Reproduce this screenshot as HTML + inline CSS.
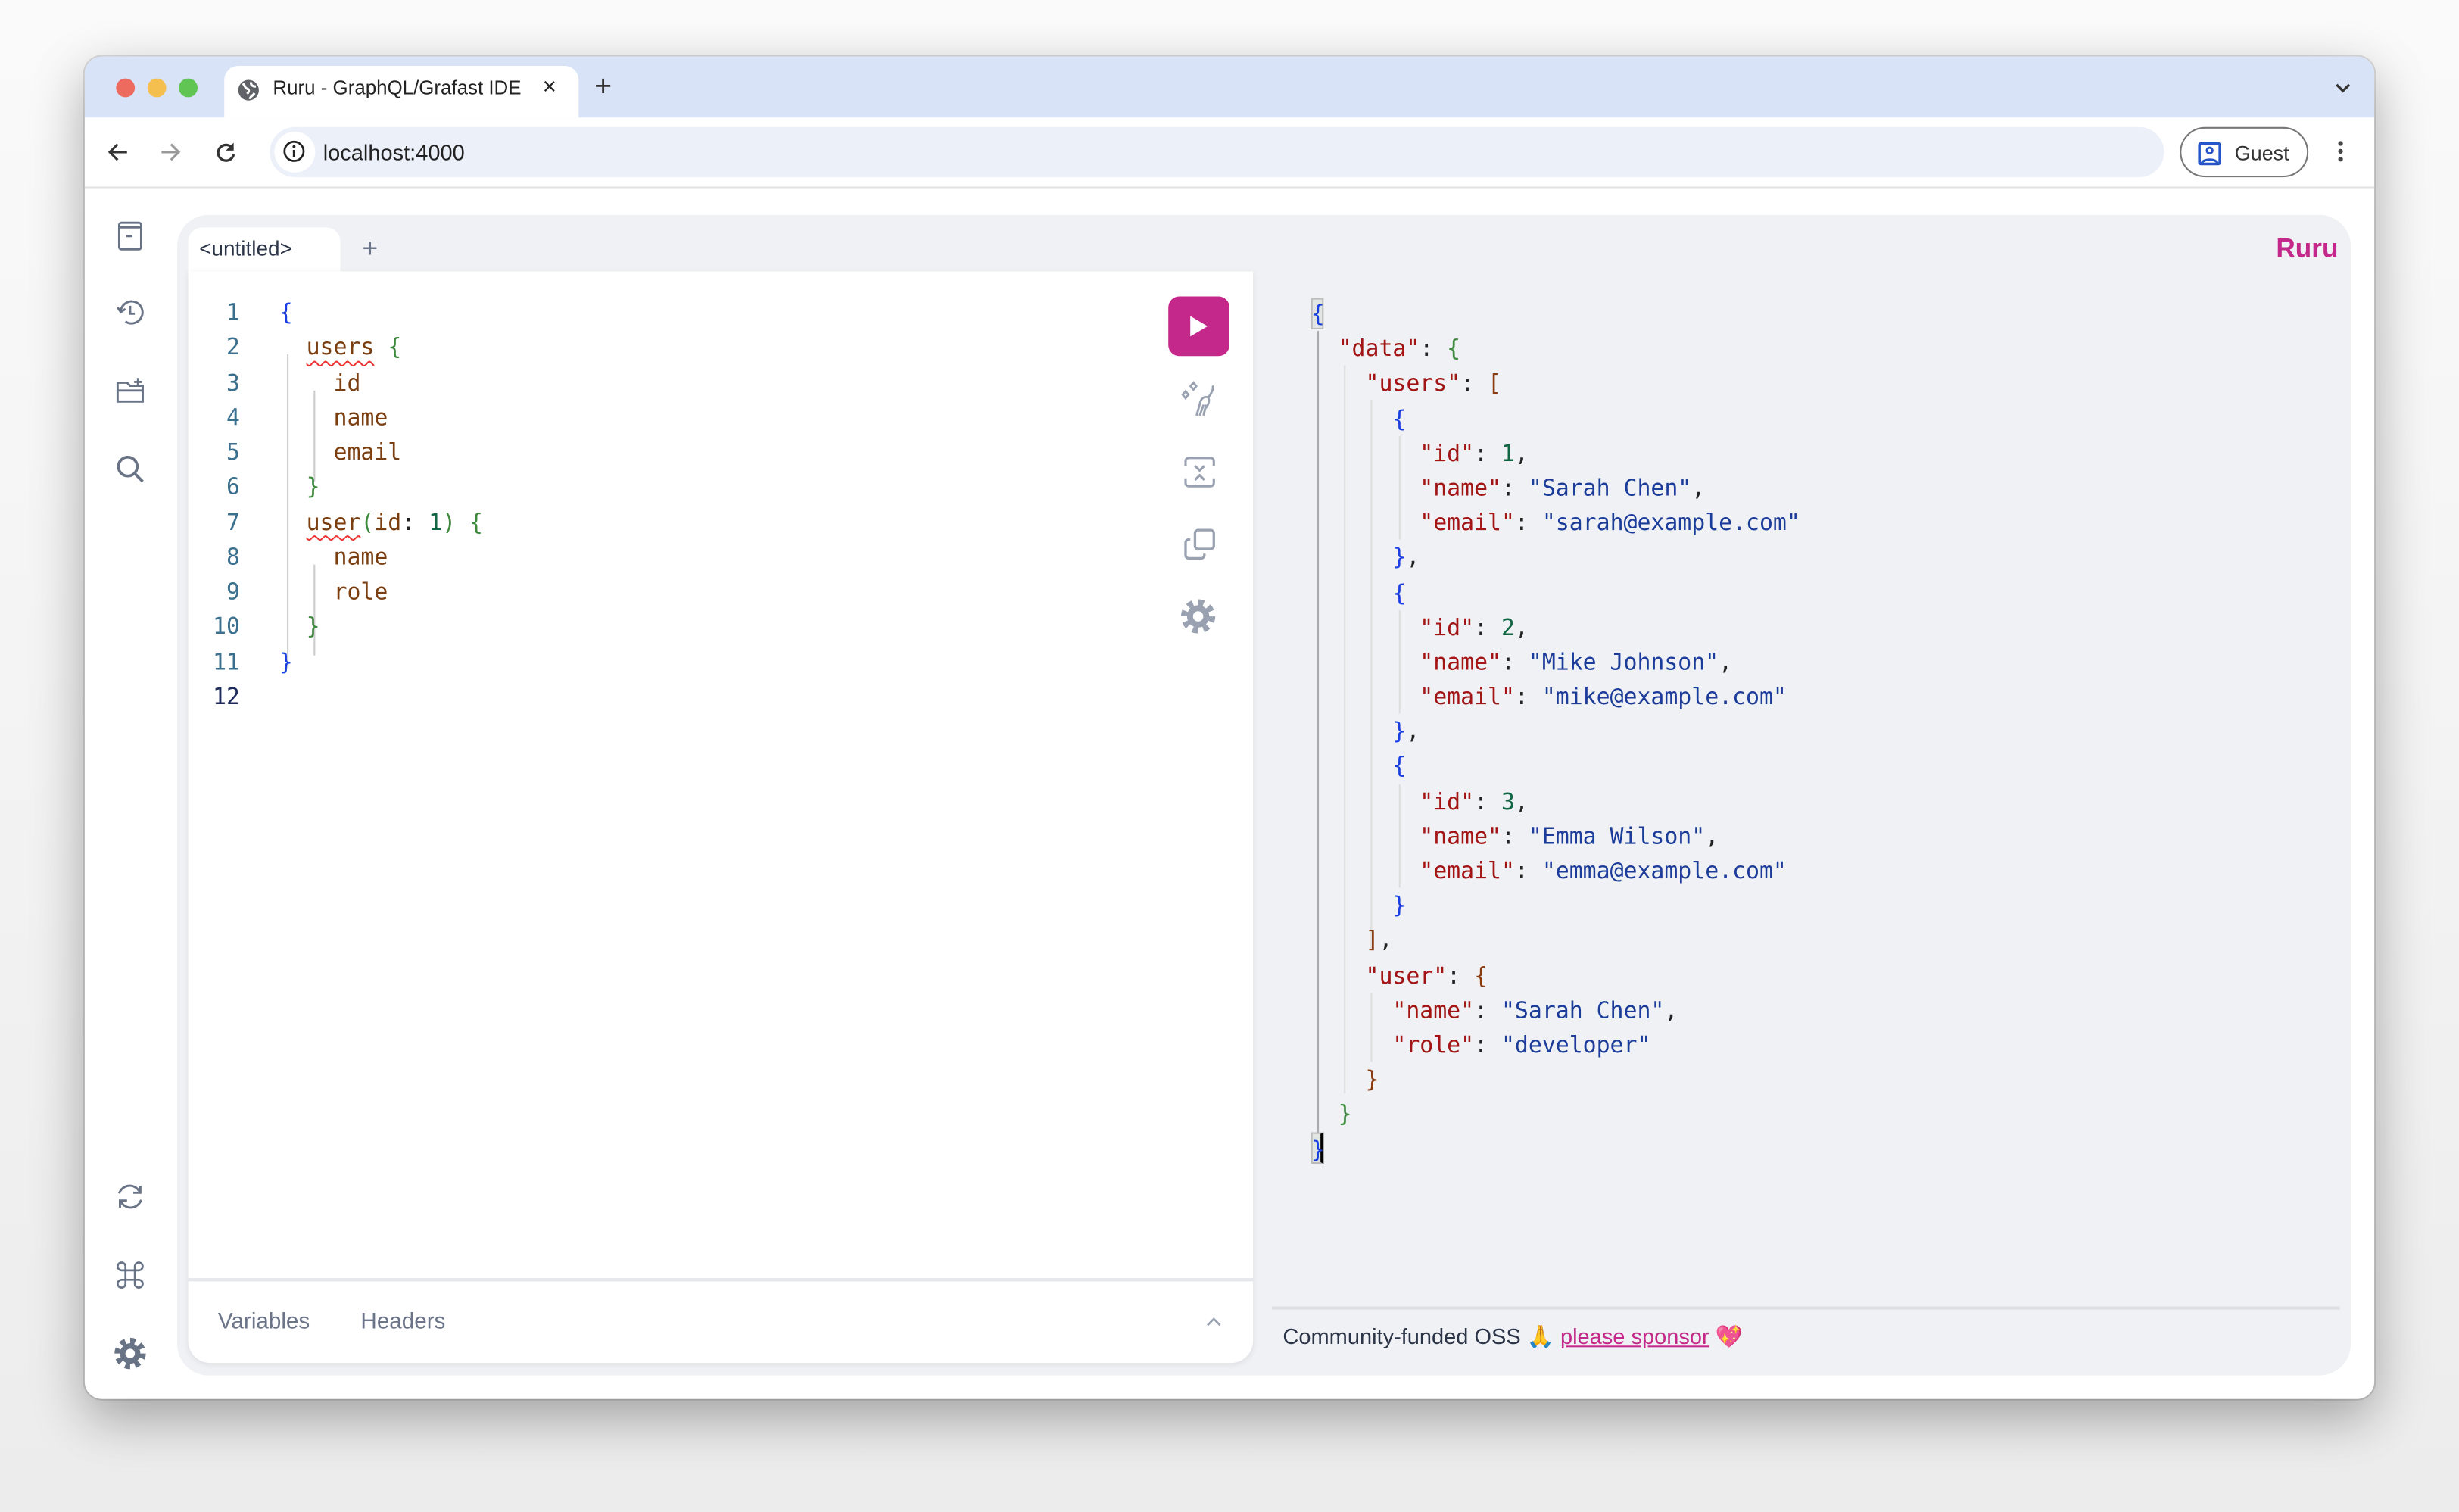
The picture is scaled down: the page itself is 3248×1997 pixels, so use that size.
<!DOCTYPE html>
<html><head><meta charset="utf-8">
<style>
*{box-sizing:border-box;margin:0;padding:0}
html,body{width:3248px;height:1996px;overflow:hidden;background:#f4f4f4}
#w{position:absolute;left:0;top:0;width:1568px;height:964px;transform:scale(2.07143);transform-origin:0 0;font-family:"Liberation Sans",sans-serif;background:linear-gradient(#fafafa,#ececec)}
.win{position:absolute;left:54px;top:36px;width:1460px;height:856px;border-radius:11px;background:#fff;box-shadow:0 12px 34px rgba(0,0,0,.32),0 0 0 1px rgba(0,0,0,.12);overflow:hidden}
.tabbar{position:absolute;left:0;top:0;width:100%;height:39px;background:#d9e3f7}
.dot{position:absolute;top:14px;width:12px;height:12px;border-radius:50%}
.ctab{position:absolute;left:89px;top:6px;width:226px;height:33px;background:#fff;border-radius:9px 9px 0 0;font-size:12.5px;color:#222}
.addr{position:absolute;left:0;top:39px;width:100%;height:45px;background:#fff;border-bottom:1px solid #e2e2e2}
.url{position:absolute;left:118px;top:6px;width:1208px;height:32px;border-radius:16px;background:#ecf1f9}
.mono{font-family:"DejaVu Sans Mono","Liberation Mono",monospace;font-size:14.4px;line-height:22.25px;white-space:pre}
.main{position:absolute;left:59px;top:101px;width:1386px;height:740px;background:#eff1f4;border-radius:20px}
.ed{position:absolute;left:7px;top:36px;width:679px;height:696px;background:#fff;border-radius:0 0 14px 14px;box-shadow:0 1px 4px rgba(0,0,0,.08)}
.k{color:#a31515}.s{color:#1c3c9a}.n{color:#116644}.b0{color:#1a3fe0}.b1{color:#3d8a3d}.b2{color:#8b3a0e}.f{color:#7a3e10}
.sq{text-decoration:underline wavy #e33;text-underline-offset:3px;text-decoration-thickness:1px}
.ic{position:absolute}
</style></head><body><div id="w">
<div class="win">
 <div class="tabbar">
  <div class="dot" style="left:20px;background:#ec6a5e"></div>
  <div class="dot" style="left:40px;background:#f4bf4f"></div>
  <div class="dot" style="left:60px;background:#61c554"></div>
  <div class="ctab">
   <svg class="ic" style="left:8px;top:8px" width="15" height="15" viewBox="0 0 16 16"><circle cx="8" cy="8" r="7" fill="#5f6368"/><path d="M4 3.5c2 1 1 3 3 3.5s1 2.5 0 3.5M10 2.5c-1 2 1 3 3 3M9 14c0-2 2-2 3-4" stroke="#fff" stroke-width="1.6" fill="none"/></svg>
   <span style="position:absolute;left:31px;top:7px">Ruru - GraphQL/Grafast IDE</span>
   <span style="position:absolute;left:203px;top:5px;font-size:15px">×</span>
  </div>
  <span style="position:absolute;left:325px;top:9px;font-size:19px;color:#333">+</span>
  <svg class="ic" style="left:1434px;top:14px" width="12" height="12" viewBox="0 0 12 12"><path d="M2 4l4 4 4-4" stroke="#333" stroke-width="1.6" fill="none"/></svg>
 </div>
 <div class="addr">
  <svg class="ic" style="left:14px;top:15px" width="14" height="14" viewBox="0 0 14 14"><path d="M13 7H2M7 2L2 7l5 5" stroke="#333" stroke-width="1.5" fill="none"/></svg>
  <svg class="ic" style="left:48px;top:15px" width="14" height="14" viewBox="0 0 14 14"><path d="M1 7h11M7 2l5 5-5 5" stroke="#999" stroke-width="1.5" fill="none"/></svg>
  <svg class="ic" style="left:83px;top:15px" width="14" height="14" viewBox="0 0 14 14"><path d="M11.5 5A5 5 0 1 0 12 8.5" stroke="#333" stroke-width="1.6" fill="none"/><path d="M12 1v5H7z" fill="#333"/></svg>
  <div class="url">
   <div style="position:absolute;left:3px;top:3px;width:26px;height:26px;border-radius:50%;background:#fff"></div>
   <svg class="ic" style="left:8px;top:8px" width="15" height="15" viewBox="0 0 16 16"><circle cx="8" cy="8" r="6.5" stroke="#222" stroke-width="1.4" fill="none"/><path d="M8 7v5" stroke="#222" stroke-width="1.6"/><circle cx="8" cy="4.8" r="1" fill="#222"/></svg>
   <span style="position:absolute;left:34px;top:8px;font-size:14px;color:#222">localhost:4000</span>
  </div>
  <div style="position:absolute;left:1336px;top:6px;width:82px;height:32px;border:1px solid #777;border-radius:16px">
   <svg class="ic" style="left:10px;top:8px" width="16" height="16" viewBox="0 0 16 16"><rect x="1.5" y="1.5" width="13" height="13" rx="1" stroke="#2456c9" stroke-width="1.7" fill="none"/><circle cx="8" cy="6" r="1.8" stroke="#2456c9" stroke-width="1.4" fill="none"/><path d="M3 14c1-3 9-3 10 0" stroke="#2456c9" stroke-width="1.5" fill="none"/></svg>
   <span style="position:absolute;left:34px;top:8px;font-size:13px;color:#333">Guest</span>
  </div>
  <div style="position:absolute;left:1437px;top:15px;width:3px;height:3px;border-radius:50%;background:#444;box-shadow:0 5px 0 #444,0 10px 0 #444"></div>
 </div>

 <svg class="ic" style="left:19px;top:104px" width="20" height="20" viewBox="0 0 20 20" fill="none" stroke="#697386" stroke-width="1.4"><rect x="3" y="2" width="14" height="17" rx="1.5"/><path d="M3 5h14M7.5 10.5h4"/></svg>
 <svg class="ic" style="left:19px;top:153px" width="20" height="20" viewBox="0 0 20 20" fill="none" stroke="#697386" stroke-width="1.4"><path d="M4 9a7 7 0 1 1 3 7"/><path d="M2 7l2 3 3-2M10 6v5h3"/></svg>
 <svg class="ic" style="left:19px;top:203px" width="20" height="20" viewBox="0 0 20 20" fill="none" stroke="#697386" stroke-width="1.4"><path d="M2 5h6l2 2h8v10H2zM2 10h16M15 2v5M12.5 4.5h5"/></svg>
 <svg class="ic" style="left:19px;top:253px" width="20" height="20" viewBox="0 0 20 20" fill="none" stroke="#697386" stroke-width="1.8"><circle cx="8.5" cy="8.5" r="6"/><path d="M13 13l5 5"/></svg>
 <svg class="ic" style="left:19px;top:717px" width="20" height="20" viewBox="0 0 20 20" fill="none" stroke="#697386" stroke-width="1.4"><path d="M3 8a7 7 0 0 1 13-1M17 12a7 7 0 0 1-13 1"/><path d="M16.5 3v4.5H12M3.5 17v-4.5H8"/></svg>
 <svg class="ic" style="left:19px;top:767px" width="20" height="20" viewBox="0 0 20 20" fill="none" stroke="#697386" stroke-width="1.3"><path d="M7 7V4.5A2.5 2.5 0 1 0 4.5 7H15.5A2.5 2.5 0 1 0 13 4.5V15.5A2.5 2.5 0 1 0 15.5 13H4.5A2.5 2.5 0 1 0 7 15.5V7"/></svg>
 <svg class="ic" style="left:18px;top:816px" width="22" height="22" viewBox="0 0 22 22"><circle cx="11" cy="11" r="8" stroke="#697386" stroke-width="4" stroke-dasharray="3.2 3.08" fill="none"/><circle cx="11" cy="11" r="6.5" fill="#697386"/><circle cx="11" cy="11" r="3" fill="#fff"/></svg>

 <div class="main">
  <div style="position:absolute;left:7px;top:8px;width:97px;height:29px;background:#fff;border-radius:9px 9px 0 0"></div>
  <span style="position:absolute;left:14px;top:14px;font-size:13.5px;color:#2c3448">&lt;untitled&gt;</span>
  <span style="position:absolute;left:118px;top:12px;font-size:17px;color:#6b7488">+</span>
  <span style="position:absolute;right:8px;top:12px;font-size:17px;font-weight:bold;color:#c4288a">Ruru</span>
  <div class="ed">
   <div class="mono" style="position:absolute;left:0;top:16px;width:33px;text-align:right;color:#3a6f8e">1
2
3
4
5
6
7
8
9
10
11
<span style="color:#1c2a5c">12</span></div>
   <div style="position:absolute;left:63px;top:53px;width:1px;height:200px;background:#ccc"></div>
   <div style="position:absolute;left:80px;top:76px;width:1px;height:58px;background:#ccc"></div>
   <div style="position:absolute;left:80px;top:187px;width:1px;height:58px;background:#ccc"></div>
   <div class="mono" style="position:absolute;left:58px;top:16px;color:#222"><span class="b0">{</span>
  <span class="f sq">users</span> <span class="b1">{</span>
    <span class="f">id</span>
    <span class="f">name</span>
    <span class="f">email</span>
  <span class="b1">}</span>
  <span class="f sq">user</span><span class="b1">(</span><span class="f">id</span>: <span class="n">1</span><span class="b1">)</span> <span class="b1">{</span>
    <span class="f">name</span>
    <span class="f">role</span>
  <span class="b1">}</span>
<span class="b0">}</span>
</div>
   <div style="position:absolute;left:625px;top:16px;width:39px;height:38px;border-radius:7px;background:#c4288a"></div>
   <svg class="ic" style="left:636px;top:27px" width="16" height="16" viewBox="0 0 16 16"><path d="M3 1.5v13l11-6.5z" fill="#fff"/></svg>
   <svg class="ic" style="left:632px;top:69px" width="26" height="26" viewBox="0 0 26 26" fill="none" stroke="#9aa2b1" stroke-width="1.4"><path d="M9 2l1.8 2.2L9 6.4 7.2 4.2zM4 7.5l1.8 2.2L4 11.9 2.2 9.7z"/><path d="M21 4c1.2 1 0 4-2.5 7.5M18.5 11.5c-2-1-4 0-5 2.5L11 23M18.5 11.5c1 2 0 5-2 7l-1 4M13 23l2.5-7M17 16l-1.5 7"/></svg>
   <svg class="ic" style="left:634px;top:117px" width="22" height="22" viewBox="0 0 22 22" fill="none" stroke="#9aa2b1" stroke-width="1.5"><path d="M2 7V4a2 2 0 0 1 2-2h14a2 2 0 0 1 2 2v3M2 15v3a2 2 0 0 0 2 2h14a2 2 0 0 0 2-2v-3M8 7l3 3 3-3M8 16l3-3 3 3"/></svg>
   <svg class="ic" style="left:634px;top:163px" width="22" height="22" viewBox="0 0 22 22" fill="none" stroke="#9aa2b1" stroke-width="1.6"><rect x="8" y="2" width="12" height="12" rx="2"/><path d="M5 8H4a2 2 0 0 0-2 2v8a2 2 0 0 0 2 2h8a2 2 0 0 0 2-2v-1"/></svg>
   <svg class="ic" style="left:632px;top:208px" width="24" height="24" viewBox="0 0 22 22"><circle cx="11" cy="11" r="8" stroke="#9aa2b1" stroke-width="4" stroke-dasharray="3.2 3.08" fill="none"/><circle cx="11" cy="11" r="6.5" fill="#9aa2b1"/><circle cx="11" cy="11" r="3" fill="#fff"/></svg>
   <div style="position:absolute;left:0;top:642px;width:100%;height:2px;background:#e3e5ea"></div>
   <span style="position:absolute;left:19px;top:662px;font-size:14.3px;color:#6b7488">Variables</span>
   <span style="position:absolute;left:110px;top:662px;font-size:14.3px;color:#6b7488">Headers</span>
   <svg class="ic" style="left:648px;top:665px" width="12" height="10" viewBox="0 0 12 10"><path d="M2 7l4-4 4 4" stroke="#9aa2b1" stroke-width="1.3" fill="none"/></svg>
  </div>
  <div style="position:absolute;left:723px;top:53px;width:8px;height:20px;background:#e2e6e2;border:1px solid #bbb"></div>
  <div style="position:absolute;left:727px;top:74px;width:1px;height:528px;background:#aaa"></div>
  <div style="position:absolute;left:744px;top:96px;width:1px;height:464px;background:#ddd"></div>
  <div style="position:absolute;left:761px;top:118px;width:1px;height:350px;background:#ddd"></div>
  <div style="position:absolute;left:779px;top:141px;width:1px;height:66px;background:#ddd"></div>
  <div style="position:absolute;left:779px;top:252px;width:1px;height:66px;background:#ddd"></div>
  <div style="position:absolute;left:779px;top:363px;width:1px;height:66px;background:#ddd"></div>
  <div style="position:absolute;left:761px;top:496px;width:1px;height:44px;background:#ddd"></div>
  <div style="position:absolute;left:723px;top:585px;width:8px;height:20px;background:#e2e6e2;border:1px solid #bbb;border-right:2px solid #000"></div>
  <div class="mono" style="position:absolute;left:723px;top:53px;color:#222;line-height:22.18px"><span class="b0">{</span>
  <span class="k">"data"</span>: <span class="b1">{</span>
    <span class="k">"users"</span>: <span class="b2">[</span>
      <span class="b0">{</span>
        <span class="k">"id"</span>: <span class="n">1</span>,
        <span class="k">"name"</span>: <span class="s">"Sarah Chen"</span>,
        <span class="k">"email"</span>: <span class="s">"sarah@example.com"</span>
      <span class="b0">}</span>,
      <span class="b0">{</span>
        <span class="k">"id"</span>: <span class="n">2</span>,
        <span class="k">"name"</span>: <span class="s">"Mike Johnson"</span>,
        <span class="k">"email"</span>: <span class="s">"mike@example.com"</span>
      <span class="b0">}</span>,
      <span class="b0">{</span>
        <span class="k">"id"</span>: <span class="n">3</span>,
        <span class="k">"name"</span>: <span class="s">"Emma Wilson"</span>,
        <span class="k">"email"</span>: <span class="s">"emma@example.com"</span>
      <span class="b0">}</span>
    <span class="b2">]</span>,
    <span class="k">"user"</span>: <span class="b2">{</span>
      <span class="k">"name"</span>: <span class="s">"Sarah Chen"</span>,
      <span class="k">"role"</span>: <span class="s">"developer"</span>
    <span class="b2">}</span>
  <span class="b1">}</span>
<span class="b0">}</span></div>
  <div style="position:absolute;left:698px;top:696px;width:681px;height:2px;background:#dcdfe4"></div>
  <div style="position:absolute;left:705px;top:707px;font-size:14px;color:#2c3448">Community-funded OSS 🙏 <span style="color:#c4288a;text-decoration:underline">please sponsor</span> 💖</div>
 </div>
</div>
</div></body></html>
